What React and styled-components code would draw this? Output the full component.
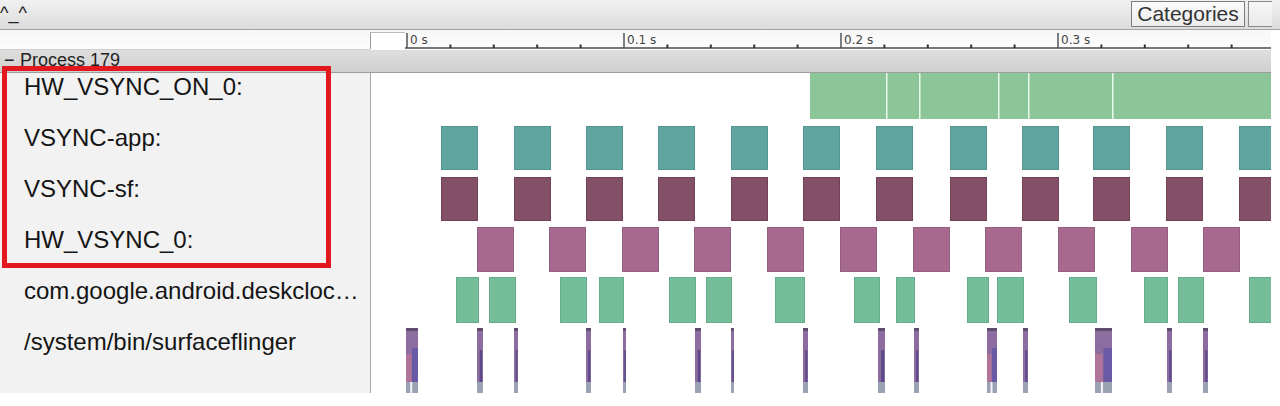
import React from 'react'
import styled, { createGlobalStyle } from 'styled-components'

const GlobalStyle = createGlobalStyle`
  html, body {
    margin: 0;
    padding: 0;
    background: #fff;
  }
  body {
    font-family: "Liberation Sans", Arial, sans-serif;
  }
`

// page x where the track area begins
const TRACK_X = 371
const TRACK_W = 900

const vsyncStarts = [441, 514, 586, 658, 731, 803, 876, 950, 1022, 1093, 1166, 1239]
const hwStarts = [477, 549, 622, 694, 767, 840, 913, 985, 1058, 1131, 1203]
const onSeparators = [886, 919, 998, 1028, 1112]
const clockSlices = [
  [456, 478], [489, 515], [560, 586], [599, 623], [669, 695], [706, 731], [775, 804],
  [854, 879], [896, 914], [967, 988], [997, 1023], [1069, 1096], [1144, 1167],
  [1178, 1203], [1249, 1271],
]
const sfSlices = [
  [406, 418, true], [477, 483], [514, 518], [586, 591], [623, 626], [695, 701],
  [731, 734], [803, 808], [878, 885], [914, 919], [987, 997, true], [1023, 1028],
  [1095, 1112, true], [1167, 1172], [1203, 1208],
]

const rulerMarks = ['0 s', '0.1 s', '0.2 s', '0.3 s']

function BlockTrack({ starts, width, color, edge, top, height, rowHeight }) {
  return (
    <svg width={TRACK_W} height={rowHeight}>
      {starts.map((x) => (
        <rect
          key={x}
          x={x - TRACK_X + 0.5}
          y={top + 0.5}
          width={width}
          height={height}
          fill={color}
          stroke={edge}
          strokeWidth="1"
        />
      ))}
    </svg>
  )
}

function SliceTrack({ slices, color, edge, top, height, rowHeight }) {
  return (
    <svg width={TRACK_W} height={rowHeight}>
      {slices.map(([a, b]) => (
        <rect
          key={a}
          x={a - TRACK_X + 0.5}
          y={top + 0.5}
          width={b - a}
          height={height}
          fill={color}
          stroke={edge}
          strokeWidth="1"
        />
      ))}
    </svg>
  )
}

function OnTrack({ rowHeight }) {
  const x0 = 810 - TRACK_X
  return (
    <svg width={TRACK_W} height={rowHeight}>
      <rect x={x0} y="0" width={1271 - 810} height="46" fill="#8cc598" />
      {onSeparators.map((x) => (
        <rect key={x} x={x - TRACK_X} y="0" width="1.5" height="46" fill="#e6fbe8" />
      ))}
    </svg>
  )
}

function SurfaceTrack({ rowHeight }) {
  return (
    <svg width={TRACK_W} height={rowHeight}>
      {sfSlices.map(([a, b, wide]) => {
        const x = a - TRACK_X
        const w = b - a
        return (
          <g key={a}>
            <rect x={x} y="0" width={w} height="54" fill="#8d6d9f" />
            <rect x={x} y="0" width={w} height="3" fill="#5f4d6e" />
            {wide ? (
              <>
                <rect x={x} y="26" width={w * 0.45} height="28" fill="#b0739a" />
                <rect x={x + w * 0.5} y="20" width={w * 0.5} height="34" fill="#6a5aa6" />
              </>
            ) : (
              <rect x={x + w * 0.45} y="22" width={Math.max(1.5, w * 0.4)} height="32" fill="#5b4a8a" />
            )}
            <rect x={x} y="54" width={w} height="11" fill="#9aa2b4" />
            {w > 8 && <rect x={x + w * 0.35} y="54" width="2" height="11" fill="#f4f4f8" />}
          </g>
        )
      })}
    </svg>
  )
}

const tracks = [
  { label: 'HW_VSYNC_ON_0:', height: 51, render: (h) => <OnTrack rowHeight={h} /> },
  {
    label: 'VSYNC-app:',
    height: 51,
    render: (h) => (
      <BlockTrack starts={vsyncStarts} width={36} color="#60a49f" edge="#559590" top={2} height={43} rowHeight={h} />
    ),
  },
  {
    label: 'VSYNC-sf:',
    height: 51,
    render: (h) => (
      <BlockTrack starts={vsyncStarts} width={36} color="#845068" edge="#6f4258" top={2} height={43} rowHeight={h} />
    ),
  },
  {
    label: 'HW_VSYNC_0:',
    height: 51,
    render: (h) => (
      <BlockTrack starts={hwStarts} width={36} color="#a7698d" edge="#95607f" top={1} height={44} rowHeight={h} />
    ),
  },
  {
    label: 'com.google.android.deskclock (pid 1342)',
    height: 51,
    render: (h) => (
      <SliceTrack slices={clockSlices} color="#74bd98" edge="#68ad8a" top={0} height={45} rowHeight={h} />
    ),
  },
  { label: '/system/bin/surfaceflinger', height: 65, render: (h) => <SurfaceTrack rowHeight={h} /> },
]

function Ruler() {
  const step = 217
  const minor = step / 5
  return (
    <svg width={1271 - 405} height="19">
      <line x1="0" y1="18" x2={1271 - 405} y2="18" stroke="#4a4a4a" strokeWidth="1.5" />
      {rulerMarks.map((m, i) => {
        const x = 2 + i * step
        return (
          <g key={m}>
            <line x1={x} y1="3" x2={x} y2="18" stroke="#555" strokeWidth="1.5" />
            <text x={x + 3} y="14" fontSize="12" fill="#444" fontFamily="DejaVu Sans, sans-serif">
              {m}
            </text>
            {[1, 2, 3, 4].map((k) => (
              <line
                key={k}
                x1={x + k * minor}
                y1="14.5"
                x2={x + k * minor}
                y2="18"
                stroke="#333"
                strokeWidth="2"
              />
            ))}
          </g>
        )
      })}
    </svg>
  )
}

function App() {
  return (
    <Page>
      <GlobalStyle />
      <TopBar>
        <Smiley>^_^</Smiley>
        <TopActions>
          <CategoriesButton>Categories</CategoriesButton>
          <SmallBox />
        </TopActions>
      </TopBar>
      <Main>
        <RulerRow>
          <RulerSpacer />
          <CornerBox />
          <Ruler />
        </RulerRow>
        <ProcessHeader>
          <span className="toggle">−</span>
          Process 179
        </ProcessHeader>
        {tracks.map((t) => (
          <Row key={t.label} $height={t.height}>
            <Label>{t.label}</Label>
            <Track>{t.render(t.height)}</Track>
          </Row>
        ))}
      </Main>
      <Highlight />
    </Page>
  )
}

const Page = styled.div`
  position: relative;
  width: 1280px;
  height: 406px;
  overflow: hidden;
  background: #fff;
`

const TopBar = styled.div`
  height: 29px;
  display: flex;
  align-items: flex-start;
  justify-content: space-between;
  padding-right: 8px;
  background: linear-gradient(#f1f1f1, #dcdcdc);
  border-bottom: 1px solid #a3a3a3;
`

const Smiley = styled.div`
  font-size: 18px;
  line-height: 22px;
  color: #222;
  padding-top: 2px;
`

const TopActions = styled.div`
  display: flex;
  gap: 3px;
  padding-top: 1px;
`

const CategoriesButton = styled.div`
  box-sizing: border-box;
  width: 114px;
  height: 26px;
  border: 1px solid #7d7d7d;
  background: linear-gradient(#fbfbfb, #ececec);
  color: #333;
  font-size: 21px;
  line-height: 24px;
  text-align: center;
`

const SmallBox = styled.div`
  box-sizing: border-box;
  width: 24px;
  height: 26px;
  border: 1px solid #8a8a8a;
  border-right: none;
  background: linear-gradient(#f7f7f7, #e9e9e9);
`

const Main = styled.div`
  width: 1271px;
`

const RulerRow = styled.div`
  display: flex;
  height: 20px;
  background: linear-gradient(#f7f7f7, #fdfdfd);
`

const RulerSpacer = styled.div`
  width: 370px;
  border-bottom: 1px solid #cfcfcf;
`

const CornerBox = styled.div`
  box-sizing: border-box;
  width: 35px;
  height: 17px;
  margin-top: 2px;
  background: #fff;
  border-left: 1px solid #999;
  border-top: 1px solid #bbb;
`

const ProcessHeader = styled.div`
  height: 22px;
  padding-left: 4px;
  background: linear-gradient(#dedede, #d0d0d0);
  border-bottom: 1px solid #9c9c9c;
  font-size: 18px;
  line-height: 21px;
  color: #222;

  .toggle {
    display: inline-block;
    width: 16px;
  }
`

const Row = styled.div`
  display: flex;
  height: ${(p) => p.$height}px;
`

const Label = styled.div`
  box-sizing: border-box;
  width: 371px;
  flex-shrink: 0;
  padding: 0 8px 0 24px;
  background: #f2f2f2;
  border-right: 1px solid #aaa;
  font-size: 24px;
  line-height: 28px;
  color: #151515;
  white-space: nowrap;
  overflow: hidden;
  text-overflow: ellipsis;
`

const Track = styled.div`
  flex: 1;
  background: #fff;
  overflow: hidden;

  svg {
    display: block;
  }
`

const Highlight = styled.div`
  position: absolute;
  left: 2px;
  top: 66px;
  width: 329px;
  height: 202px;
  box-sizing: border-box;
  border: 5px solid #e3171e;
  pointer-events: none;
`

export default App
